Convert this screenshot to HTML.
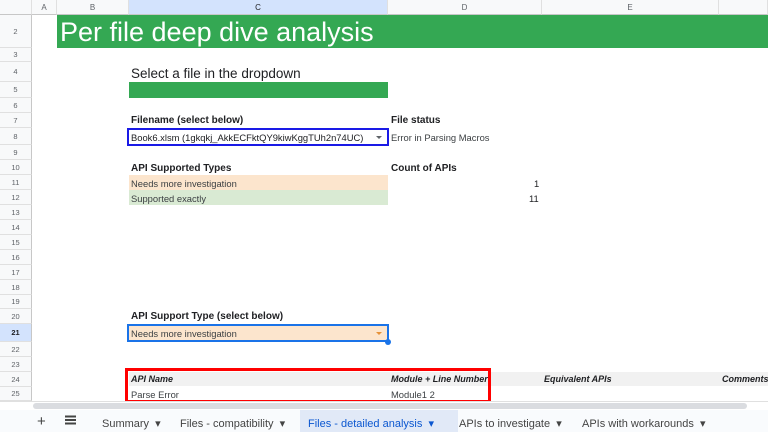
<!DOCTYPE html>
<html><head><meta charset="utf-8"><style>
*{margin:0;padding:0;box-sizing:border-box}
body{width:768px;height:432px;overflow:hidden;background:#fff;font-family:"Liberation Sans",Arial,sans-serif;position:relative;color:#202124}
.a{position:absolute}
.hdr{top:0;height:15px;border-right:1px solid #e0e0e0;border-bottom:1px solid #c7c7c7;background:#f8f9fa;font-size:8px;color:#5f6368;text-align:center;line-height:15px}
.rn{left:0;width:32px;border-bottom:1px solid #e0e0e0;border-right:1px solid #c7c7c7;background:#f8f9fa;font-size:7.5px;color:#5f6368;text-align:center}
.t{font-size:9.4px;white-space:nowrap}
.b{font-weight:bold;font-size:10px}
.i{font-size:9px}
</style></head><body>
<div class="a hdr" style="left:0;width:32px"></div>
<div class="a hdr" style="left:32px;width:25px">A</div>
<div class="a hdr" style="left:57px;width:72px">B</div>
<div class="a hdr" style="left:129px;width:259px;background:#d3e3fd;color:#202124">C</div>
<div class="a hdr" style="left:388px;width:154px">D</div>
<div class="a hdr" style="left:542px;width:177px">E</div>
<div class="a hdr" style="left:719px;width:49px"></div>
<div class="a rn" style="top:15px;height:33px;line-height:33px">2</div>
<div class="a rn" style="top:48px;height:14px;line-height:14px">3</div>
<div class="a rn" style="top:62px;height:20px;line-height:20px">4</div>
<div class="a rn" style="top:82px;height:16px;line-height:16px">5</div>
<div class="a rn" style="top:98px;height:15px;line-height:15px">6</div>
<div class="a rn" style="top:113px;height:15px;line-height:15px">7</div>
<div class="a rn" style="top:128px;height:17px;line-height:17px">8</div>
<div class="a rn" style="top:145px;height:15px;line-height:15px">9</div>
<div class="a rn" style="top:160px;height:15px;line-height:15px">10</div>
<div class="a rn" style="top:175px;height:15px;line-height:15px">11</div>
<div class="a rn" style="top:190px;height:15px;line-height:15px">12</div>
<div class="a rn" style="top:205px;height:15px;line-height:15px">13</div>
<div class="a rn" style="top:220px;height:15px;line-height:15px">14</div>
<div class="a rn" style="top:235px;height:15px;line-height:15px">15</div>
<div class="a rn" style="top:250px;height:15px;line-height:15px">16</div>
<div class="a rn" style="top:265px;height:15px;line-height:15px">17</div>
<div class="a rn" style="top:280px;height:15px;line-height:15px">18</div>
<div class="a rn" style="top:295px;height:14px;line-height:14px">19</div>
<div class="a rn" style="top:309px;height:15px;line-height:15px">20</div>
<div class="a rn" style="top:324px;height:18px;line-height:18px;background:#d3e3fd;color:#202124;font-weight:bold">21</div>
<div class="a rn" style="top:342px;height:15px;line-height:15px">22</div>
<div class="a rn" style="top:357px;height:15px;line-height:15px">23</div>
<div class="a rn" style="top:372px;height:15px;line-height:15px">24</div>
<div class="a rn" style="top:387px;height:14px;line-height:14px">25</div>

<div class="a" style="left:57px;top:15px;width:711px;height:33px;background:#34a853"></div>
<div class="a" style="left:60px;top:15px;font-size:27px;color:#fff;line-height:34px;white-space:nowrap">Per file deep dive analysis</div>
<div class="a" style="left:131px;top:66px;font-size:13.5px;color:#202124">Select a file in the dropdown</div>
<div class="a" style="left:129px;top:82px;width:259px;height:16px;background:#34a853"></div>

<div class="a t b" style="left:131px;top:115px">Filename (select below)</div>
<div class="a t b" style="left:391px;top:115px">File status</div>
<div class="a" style="left:127px;top:128px;width:262px;height:18px;border:2px solid #1a1ae6"></div>
<div class="a t" style="left:131px;top:132px">Book6.xlsm (1gkqkj_AkkECFktQY9kiwKggTUh2n74UC)</div>
<div class="a" style="left:376px;top:136px;width:0;height:0;border-left:3px solid transparent;border-right:3px solid transparent;border-top:3px solid #5f6368"></div>
<div class="a t" style="left:391px;top:132px;color:#3c4043">Error in Parsing Macros</div>

<div class="a t b" style="left:131px;top:163px">API Supported Types</div>
<div class="a t b" style="left:391px;top:163px">Count of APIs</div>
<div class="a" style="left:129px;top:175px;width:259px;height:15px;background:#fce5cd"></div>
<div class="a t" style="left:131px;top:178px;color:#3c4043">Needs more investigation</div>
<div class="a t" style="left:534px;top:178px">1</div>
<div class="a" style="left:129px;top:190px;width:259px;height:15px;background:#d9ead3"></div>
<div class="a t" style="left:131px;top:193px;color:#3c4043">Supported exactly</div>
<div class="a t" style="left:529px;top:193px">11</div>

<div class="a t b" style="left:131px;top:311px">API Support Type (select below)</div>
<div class="a" style="left:129px;top:324px;width:259px;height:18px;background:#fce5cd"></div>
<div class="a" style="left:127px;top:324px;width:262px;height:18px;border:2px solid #1a73e8"></div>
<div class="a" style="left:385px;top:339px;width:6px;height:6px;border-radius:50%;background:#1a73e8"></div>
<div class="a t" style="left:131px;top:328px;color:#3c4043">Needs more investigation</div>
<div class="a" style="left:376px;top:332px;width:0;height:0;border-left:3px solid transparent;border-right:3px solid transparent;border-top:3px solid #e69138"></div>

<div class="a" style="left:129px;top:372px;width:639px;height:14px;background:#f1f1f1"></div>
<div class="a t b i" style="left:131px;top:374px;font-style:italic">API Name</div>
<div class="a t b i" style="left:391px;top:374px;font-style:italic">Module + Line Number</div>
<div class="a t b i" style="left:544px;top:374px;font-style:italic">Equivalent APIs</div>
<div class="a t b i" style="left:722px;top:374px;font-style:italic">Comments</div>
<div class="a t" style="left:131px;top:389px;color:#3c4043">Parse Error</div>
<div class="a t" style="left:391px;top:389px;color:#3c4043">Module1 2</div>
<div class="a" style="left:125px;top:368px;width:366px;height:35px;border:3px solid #ff0000"></div>

<div class="a" style="left:0;top:401px;width:768px;height:9px;background:#fff;border-top:1px solid #e0e0e0"></div>
<div class="a" style="left:33px;top:403px;width:714px;height:6px;border-radius:3px;background:#dadce0"></div>
<div class="a" style="left:0;top:410px;width:768px;height:22px;background:#f9fbfd"></div>
<div class="a" style="left:300px;top:410px;width:158px;height:22px;background:#e1e9f7"></div>
<div class="a" style="left:37px;top:413px;font-size:15px;color:#444">+</div>
<div class="a" style="left:65px;top:419px;width:11px;height:1.5px;background:#444;box-shadow:0 -3.5px 0 #444,0 3.5px 0 #444"></div>
<div class="a" style="left:102px;top:417px;font-size:11px;color:#444;white-space:nowrap">Summary&nbsp;&nbsp;▾</div>
<div class="a" style="left:180px;top:417px;font-size:11px;color:#444;white-space:nowrap">Files - compatibility&nbsp;&nbsp;▾</div>
<div class="a" style="left:308px;top:417px;font-size:11px;color:#0b57d0;white-space:nowrap">Files - detailed analysis&nbsp;&nbsp;▾</div>
<div class="a" style="left:459px;top:417px;font-size:11px;color:#444;white-space:nowrap">APIs to investigate&nbsp;&nbsp;▾</div>
<div class="a" style="left:582px;top:417px;font-size:11px;color:#444;white-space:nowrap">APIs with workarounds&nbsp;&nbsp;▾</div>
</body></html>
